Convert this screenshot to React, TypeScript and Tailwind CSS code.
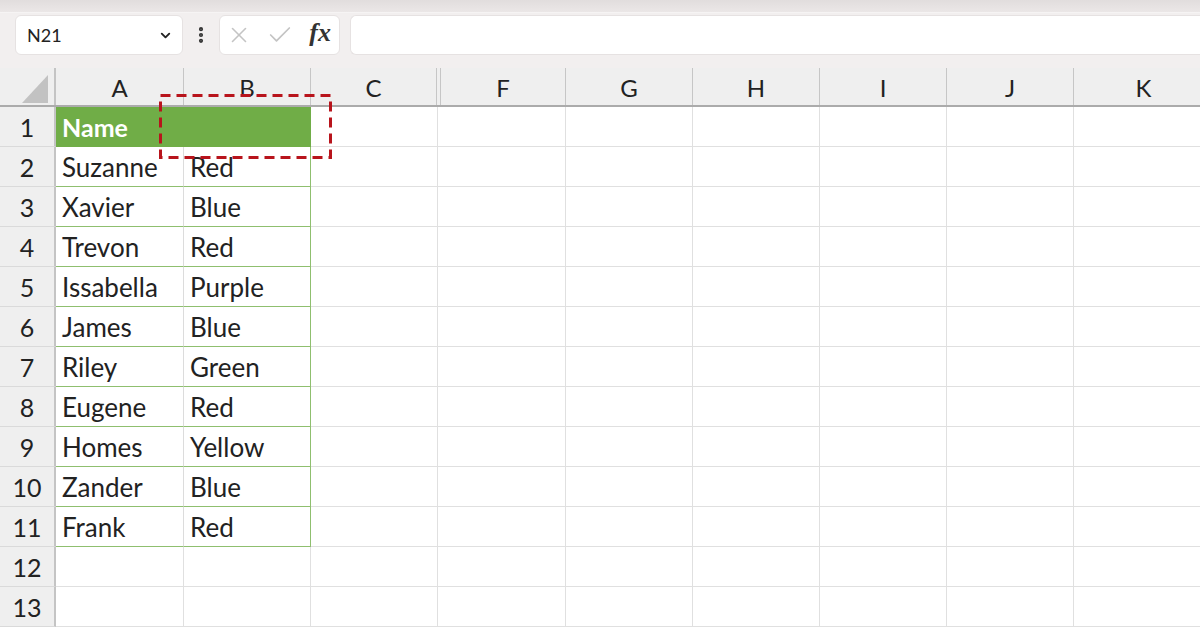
import React from "react";
import { ChevronDown, X, Check, EllipsisVertical } from "lucide-react";

const font = { fontFamily: "Lato, 'Liberation Sans', sans-serif" };

const cols: { key: string; w: number }[] = [
  { key: "A", w: 128 },
  { key: "B", w: 127 },
  { key: "C", w: 126 },
  { key: "|", w: 4 },
  { key: "F", w: 125 },
  { key: "G", w: 127 },
  { key: "H", w: 127 },
  { key: "I", w: 127 },
  { key: "J", w: 127 },
  { key: "K", w: 140 },
];

const data: [string, string][] = [
  ["Suzanne", "Red"],
  ["Xavier", "Blue"],
  ["Trevon", "Red"],
  ["Issabella", "Purple"],
  ["James", "Blue"],
  ["Riley", "Green"],
  ["Eugene", "Red"],
  ["Homes", "Yellow"],
  ["Zander", "Blue"],
  ["Frank", "Red"],
];

function Toolbar() {
  return (
    <div className="bg-[#f2efef]">
      <div className="h-[13px] bg-gradient-to-b from-[#e1dddd] to-[#ebe7e7] border-b border-[#f6f4f4]" />
      <div className="flex items-center h-[55px] pl-[15px] pb-[13px] pt-[2px]">
        <div className="w-[168px] h-[40px] bg-white rounded-md border border-[#e6e2e2] flex items-center justify-between pl-[11px] pr-[9px]">
          <span className="text-[18px] text-[#222]" style={font}>N21</span>
          <ChevronDown size={15} strokeWidth={3} className="text-[#222]" />
        </div>
        <div className="w-[36px] flex items-center justify-center">
          <EllipsisVertical size={20} strokeWidth={3} className="text-[#333]" />
        </div>
        <div className="w-[121px] h-[40px] bg-white rounded-md border border-[#e6e2e2] flex items-center pl-[6px] pr-[6px]">
          <X size={26} strokeWidth={1.5} className="text-[#c4c4c4]" />
          <Check size={28} strokeWidth={1.5} className="text-[#c4c4c4] ml-[14px]" />
          <span
            className="ml-auto text-[26px] italic text-[#333] leading-none pb-[4px] pr-[2px]"
            style={{ fontFamily: "'Liberation Serif', 'DejaVu Serif', serif", fontWeight: 600 }}
          >
            fx
          </span>
        </div>
        <div className="ml-[10px] flex-1 h-[40px] bg-white rounded-l-md border border-[#e6e2e2] border-r-0" />
      </div>
    </div>
  );
}

function HeaderRow() {
  return (
    <div className="flex h-[39px] bg-[#efefef] border-b-2 border-[#ababab]" style={font}>
      <div className="relative w-[56px] shrink-0 border-r-2 border-[#c4c4c4] flex items-end justify-end pr-[6px] pb-[2px]">
        <svg width="26" height="28" viewBox="0 0 26 28">
          <polygon points="26,0 26,28 0,28" fill="#c2c2c2" />
        </svg>
      </div>
      {cols.map((c) => (
        <div
          key={c.key}
          className="shrink-0 border-r border-[#c6c6c6] flex items-center justify-center pt-[2px] text-[24px] text-[#222]"
          style={{ width: c.w }}
        >
          {c.key === "|" ? "" : c.key}
        </div>
      ))}
    </div>
  );
}

function Row({ n }: { n: number }) {
  const isHead = n === 1;
  const inTable = n >= 2 && n <= 11;
  const entry = inTable ? data[n - 2] : null;
  return (
    <div className="flex h-[40px]" style={font}>
      <div className="w-[56px] shrink-0 bg-[#efefef] border-r-2 border-[#c4c4c4] border-b border-b-[#dadada] flex items-center justify-center pt-[2px] text-[25px] text-[#222]">
        {n}
      </div>
      {cols.map((c, i) => {
        if (c.key === "|") return null;
        let w = c.w;
        if (c.key === "C") w = c.w + 1;
        if (c.key === "F") w = c.w + 3;
        let cls = "shrink-0 flex items-center pl-[6px] pt-[2px] text-[26px] text-[#222] border-r border-b border-[#e0e0e0]";
        let text = "";
        if (isHead && (c.key === "A" || c.key === "B")) {
          cls = "shrink-0 flex items-center pl-[6px] pt-[2px] text-[25px] font-bold text-white bg-[#70ad47] border-b border-[#70ad47]" + (c.key === "B" ? " border-r border-r-[#70ad47]" : "");
          text = c.key === "A" ? "Name" : "";
        } else if (inTable && c.key === "A") {
          cls = "shrink-0 flex items-center pl-[6px] pt-[2px] text-[26px] text-[#222] border-r border-r-[#dcdcdc] border-b border-b-[#8fbf6f]";
          text = entry![0];
        } else if (inTable && c.key === "B") {
          cls = "shrink-0 flex items-center pl-[6px] pt-[2px] text-[26px] text-[#222] border-r border-r-[#8fbf6f] border-b border-b-[#8fbf6f]";
          text = entry![1];
        }
        return (
          <div key={i} className={cls} style={{ width: w }}>
            {text}
          </div>
        );
      })}
    </div>
  );
}

export default function App() {
  const rows = Array.from({ length: 13 }, (_, i) => i + 1);
  return (
    <div className="relative w-[1200px] h-[630px] overflow-hidden bg-white">
      <Toolbar />
      <HeaderRow />
      {rows.map((n) => (
        <Row key={n} n={n} />
      ))}
      <svg className="absolute left-[159px] top-[94px]" width="174" height="66" viewBox="0 0 174 66">
        <rect x="1.5" y="1.5" width="170" height="62" fill="none" stroke="#b8141c" strokeWidth="3" strokeDasharray="10 6" />
      </svg>
    </div>
  );
}
